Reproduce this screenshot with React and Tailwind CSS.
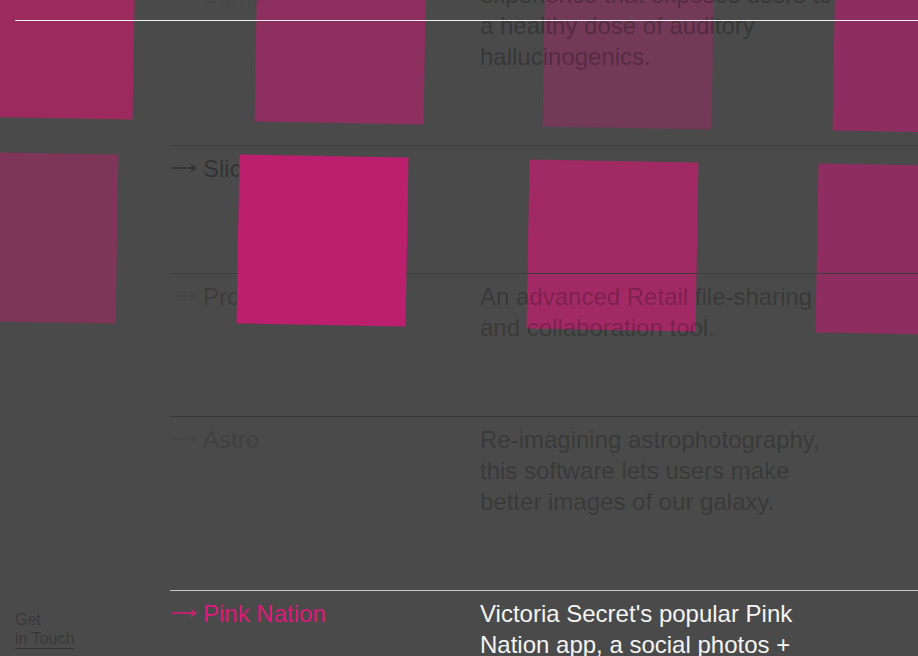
import React from "react";

// Floating squares behind the list (x, y, size, colour)
const backSquares = [
  { id: 1, cls: "left-[-35px] top-[-51px] bg-[#9c2a5e]" },
  { id: 2, cls: "left-[256px] top-[-46px] bg-[#8e305f]" },
  { id: 3, cls: "left-[544px] top-[-41px] bg-[#733a58]" },
  { id: 4, cls: "left-[834px] top-[-37px] bg-[#8e2d5f]" },
  { id: 5, cls: "left-[-52px] top-[153px] bg-[#7f3558]" },
  { id: 7, cls: "left-[528px] top-[161px] bg-[#a22a64]" },
  { id: 8, cls: "left-[817px] top-[165px] bg-[#8e2d5f]" },
];

const projects = [
  {
    id: "sonic",
    title: "Sonic",
    description:
      "experience that exposes users to a healthy dose of auditory hallucinogenics.",
    titleClass: "text-black/[0.04]",
    arrowClass: "text-black/[0.04]",
    descClass: "text-black/[0.27]",
    rowClass: "border-[#3b3b3b]",
  },
  {
    id: "slice",
    title: "Slice",
    description: "",
    titleClass: "text-black/[0.32]",
    arrowClass: "text-black/[0.36]",
    descClass: "text-black/[0.22]",
    rowClass: "border-[#3b3b3b] h-[128px]",
  },
  {
    id: "prodrop",
    title: "Prodrop",
    description: "An advanced Retail file-sharing and collaboration tool.",
    titleClass: "text-black/[0.2]",
    arrowClass: "text-black/[0.08]",
    descClass: "text-black/[0.24]",
    rowClass: "border-[#3b3b3b]",
  },
  {
    id: "astro",
    title: "Astro",
    description:
      "Re-imagining astrophotography, this software lets users make better images of our galaxy.",
    titleClass: "text-black/[0.15]",
    arrowClass: "text-black/[0.07]",
    descClass: "text-black/[0.24]",
    rowClass: "border-[#383838]",
  },
  {
    id: "pink",
    title: "Pink Nation",
    description:
      "Victoria Secret's popular Pink Nation app, a social photos + music platform for fans.",
    titleClass: "text-[#de1878]",
    arrowClass: "text-[#de1878]",
    descClass: "text-[#f4f4f4]",
    rowClass: "border-[#c6c6c6]",
  },
];

const Arrow = ({ className }) => (
  <svg
    width="25"
    height="10"
    viewBox="0 0 25 10"
    fill="none"
    stroke="currentColor"
    strokeWidth="1.5"
    className={`mt-[-2px] shrink-0 ${className}`}
  >
    <path d="M0 5H23.5M19 1.5L23.5 5L19 8.5" />
  </svg>
);

const App = () => {
  return (
    <div className="relative h-[656px] w-full overflow-hidden bg-[#4a4a4a] font-['Liberation_Sans',Arial,sans-serif]">
      {/* Back layer */}
      {backSquares.map((sq) => (
        <div
          key={sq.id}
          className={`absolute h-[169px] w-[169px] rotate-[1deg] ${sq.cls}`}
        />
      ))}

      {/* Project list */}
      <main className="relative mt-[-29px] pl-[170px]">
        {projects.map((p) => (
          <section
            key={p.id}
            className={`grid grid-cols-[310px_360px] border-t pt-[7px] pb-[73px] text-[24px] leading-[31px] ${p.rowClass}`}
          >
            <h3 className={`flex h-[31px] items-center gap-[6px] pl-[2px] ${p.titleClass}`}>
              <Arrow className={p.arrowClass} />
              <span>{p.title}</span>
            </h3>
            <p className={p.descClass}>{p.description}</p>
          </section>
        ))}
      </main>

      {/* Front square */}
      <div className="absolute left-[238px] top-[156px] h-[169px] w-[169px] rotate-[1deg] bg-[#bc1f6e]" />

      {/* Header rule */}
      <div className="absolute left-[15px] right-0 top-[20px] h-px bg-[#f2f2f2]" />

      {/* Contact link */}
      <a
        href="#contact"
        className="absolute bottom-[7px] left-[15px] flex flex-col text-[16px] leading-[19px] text-black/[0.26]"
      >
        <span>Get</span>
        <span className="w-fit border-b border-black/[0.3]">in Touch</span>
      </a>
    </div>
  );
};

export default App;
